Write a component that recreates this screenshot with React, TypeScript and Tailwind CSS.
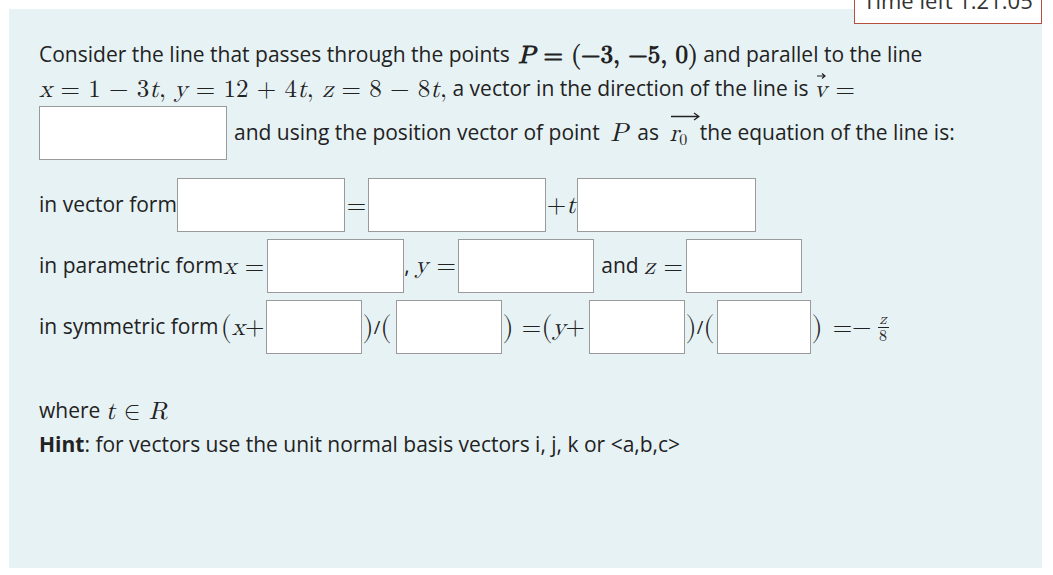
import React from "react"

const serif = "font-['Latin_Modern_Math','Liberation_Serif','DejaVu_Serif',serif]"

const Box = ({ w }: { w: string }) => (
  <span className={`inline-block h-[54px] shrink-0 border border-[#9a9a9a] bg-white ${w}`} />
)

const M = ({ children, className = "" }: { children: React.ReactNode; className?: string }) => (
  <span className={`${serif} text-[25px] leading-none ${className}`}>{children}</span>
)

const V = ({ children }: { children: React.ReactNode }) => <i className="italic">{children}</i>

const Arrow = ({ w }: { w: number }) => (
  <svg width={w} height="9" viewBox={`0 0 ${w} 9`} className="absolute left-0 -top-[9px]">
    <path d={`M1 4.5H${w - 1}M${w - 6} 1L${w - 1} 4.5L${w - 6} 8`} stroke="#222" strokeWidth="1.3" fill="none" />
  </svg>
)

export default function App() {
  return (
    <div className="relative min-h-[575px] bg-white font-['Open_Sans','Noto_Sans',sans-serif] text-[#222]">
      <div className="absolute right-[11px] -top-[28px] flex h-[52px] w-[188px] items-end justify-center border border-[#b5503f] bg-white pb-[12px] text-[22px] leading-none text-[#333]">
        Time left 1:21:05
      </div>

      <div className="ml-[9px] mr-[11px] pt-[9px]">
        <div className="h-[559px] bg-[#e7f2f5] px-[30px] pt-[29px] text-[21px]">
          <div className="flex h-[34px] items-center whitespace-nowrap">
            Consider the line that passes through the points&nbsp;
            <M className="ml-[3px] font-bold">
              <V>P</V> = (−3, −5, 0)
            </M>
            &nbsp;and parallel to the line
          </div>
          <div className="flex h-[34px] items-center whitespace-nowrap">
            <M>
              <V>x</V> = 1 − 3<V>t</V>, <V>y</V> = 12 + 4<V>t</V>, <V>z</V> = 8 − 8<V>t</V>,
            </M>
            &nbsp;a vector in the direction of the line is&nbsp;
            <M>
              <span className="relative inline-block">
                <V>v</V>
                <svg width="10" height="8" viewBox="0 0 10 8" className="absolute left-[2px] -top-[5px]">
                  <path d="M1 4H9M6 1.5L9 4L6 6.5" stroke="#222" strokeWidth="1.2" fill="none" />
                </svg>
              </span>{" "}
              =
            </M>
          </div>
          <div className="flex items-center whitespace-nowrap">
            <Box w="w-[188px]" />
            <span className="ml-[7px]">and using the position vector of point&nbsp;</span>
            <M className="ml-[5px] text-[26px]">
              <V>P</V>
            </M>
            <span className="ml-[4px]">&nbsp;as&nbsp;</span>
            <M className="relative ml-[5px] inline-block pr-[2px]">
              <V>r</V>
              <sub className="text-[16px] not-italic">0</sub>
              <Arrow w={30} />
            </M>
            <span className="ml-[5px]">&nbsp;the equation of the line is:</span>
          </div>

          <div className="mt-[18px] flex flex-col gap-[7px] whitespace-nowrap">
            <div className="flex items-center">
              <span>in vector form</span>
              <Box w="w-[168px]" />
              <M className="w-[23px] text-center">=</M>
              <Box w="w-[178px]" />
              <M className="w-[31px] text-center">
                +<V>t</V>
              </M>
              <Box w="w-[179px]" />
            </div>
            <div className="flex items-center">
              <span>in parametric form</span>
              <M className="mr-[3px]">
                <V>x</V> =
              </M>
              <Box w="w-[137px]" />
              <span className="w-[54px]">
                ,&nbsp;
                <M>
                  <V>y</V> =
                </M>
              </span>
              <Box w="w-[136px]" />
              <span className="ml-[7px]">and&nbsp;</span>
              <M className="mr-[3px]">
                <V>z</V> =
              </M>
              <Box w="w-[116px]" />
            </div>
            <div className="flex items-center">
              <span>in symmetric form</span>
              <M className="ml-[2px] text-[29px]">(</M>
              <M className="mr-[2px]">
                <V>x</V>+
              </M>
              <Box w="w-[96px]" />
              <M className="flex w-[34px] items-center">
                <span className="text-[29px]">)</span>
                <span className="font-['Open_Sans',sans-serif] text-[18px]">/</span>
                <span className="text-[29px]">(</span>
              </M>
              <Box w="w-[106px]" />
              <M className="flex w-[87px] items-center">
                <span className="text-[29px]">)</span>
                <span className="ml-[8px]">=</span>
                <span className="text-[29px]">(</span>
                <V>y</V>+
              </M>
              <Box w="w-[96px]" />
              <M className="flex w-[32px] items-center">
                <span className="text-[29px]">)</span>
                <span className="font-['Open_Sans',sans-serif] text-[18px]">/</span>
                <span className="text-[29px]">(</span>
              </M>
              <Box w="w-[94px]" />
              <M className="flex items-center">
                <span className="text-[29px]">)</span>
                <span className="ml-[10px]">=−</span>
                <span className="ml-[6px] inline-flex flex-col items-center text-[16px] leading-[16px]">
                  <V>z</V>
                  <span className="block h-px w-[11px] bg-[#222]" />
                  <span>8</span>
                </span>
              </M>
            </div>
          </div>

          <div className="mt-[40px] flex h-[34px] items-center">
            where&nbsp;
            <M>
              <V>t</V> ∈ <V>R</V>
            </M>
          </div>
          <div className="flex h-[34px] items-center">
            <b className="font-bold">Hint</b>: for vectors use the unit normal basis vectors i, j, k or &lt;a,b,c&gt;
          </div>
        </div>
      </div>
    </div>
  )
}
